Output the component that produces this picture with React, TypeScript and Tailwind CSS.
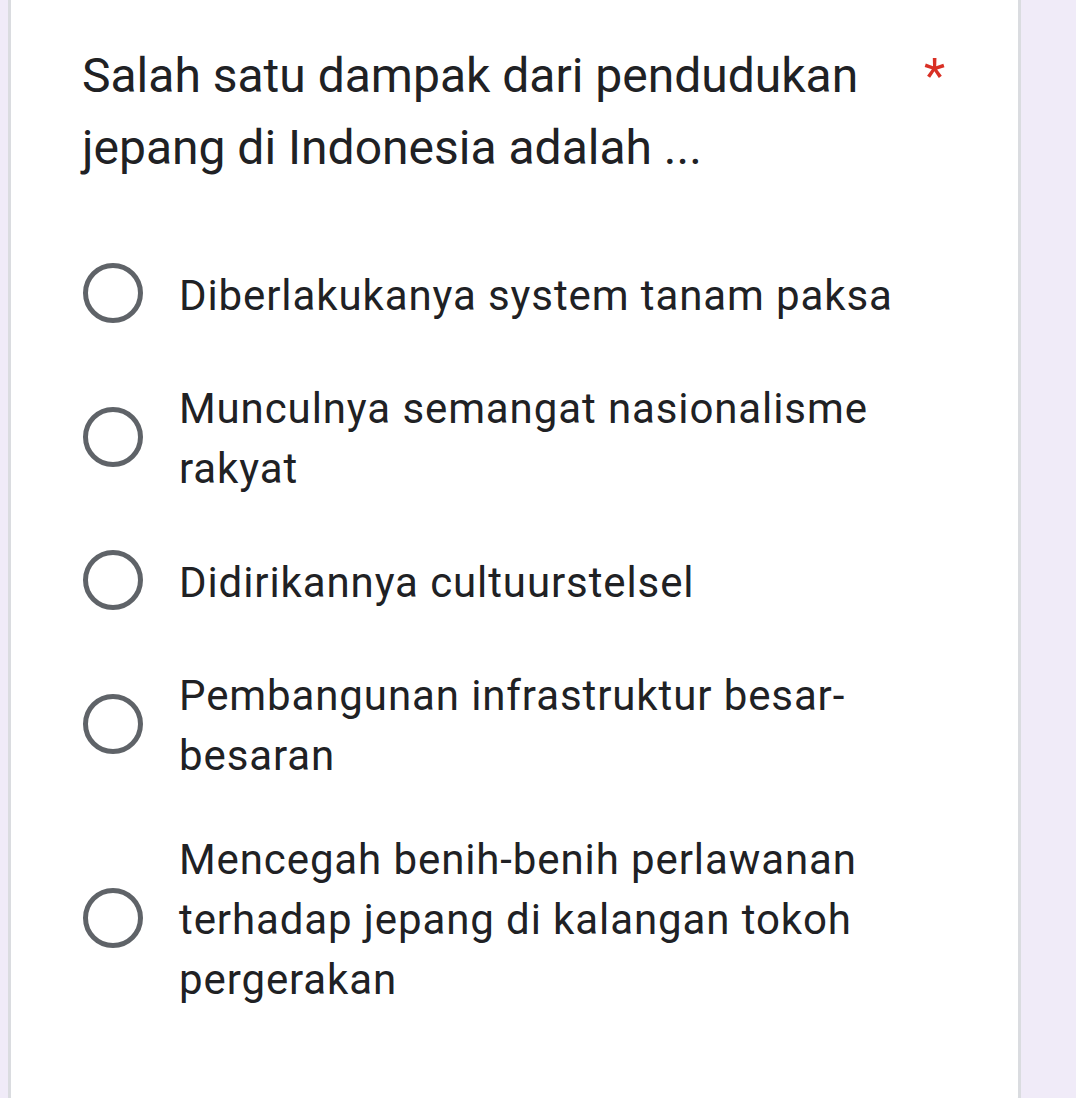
import React from "react";

const options = [
  "Diberlakukanya system tanam paksa",
  "Munculnya semangat nasionalisme rakyat",
  "Didirikannya cultuurstelsel",
  "Pembangunan infrastruktur besar-besaran",
  "Mencegah benih-benih perlawanan terhadap jepang di kalangan tokoh pergerakan",
];

const Radio = () => (
  <div className="w-[60px] h-[60px] shrink-0 rounded-full border-[5px] border-[#5f6368] ml-px mb-[5px]" />
);

const App = () => {
  return (
    <div
      className="w-full h-[1098px] overflow-hidden bg-[#f0ebf8] pl-[8px]"
      style={{ fontFamily: "Roboto, 'Noto Sans', sans-serif" }}
    >
      <div className="w-[1013px] h-[1120px] bg-white border-x-[3px] border-b-[3px] border-[#dadce0] rounded-b-[24px] pl-[71px] pr-[73px] pt-[40px]">
        <div className="flex items-start text-[48px] leading-[72px] text-[#202124]">
          <div className="flex-1">
            Salah satu dampak dari pendudukan jepang di Indonesia adalah ...
          </div>
          <span className="shrink-0 pl-[24px] text-[49px] text-[#d93025]">*</span>
        </div>
        <div className="mt-[50px] flex flex-col">
          {options.map((opt) => (
            <div
              key={opt}
              className="flex items-center min-h-[123px] py-[22px]"
            >
              <Radio />
              <div className="flex-1 pl-[36px] text-[42px] leading-[60px] tracking-[0.9px] text-[#202124]">
                {opt}
              </div>
            </div>
          ))}
        </div>
      </div>
    </div>
  );
};

export default App;
